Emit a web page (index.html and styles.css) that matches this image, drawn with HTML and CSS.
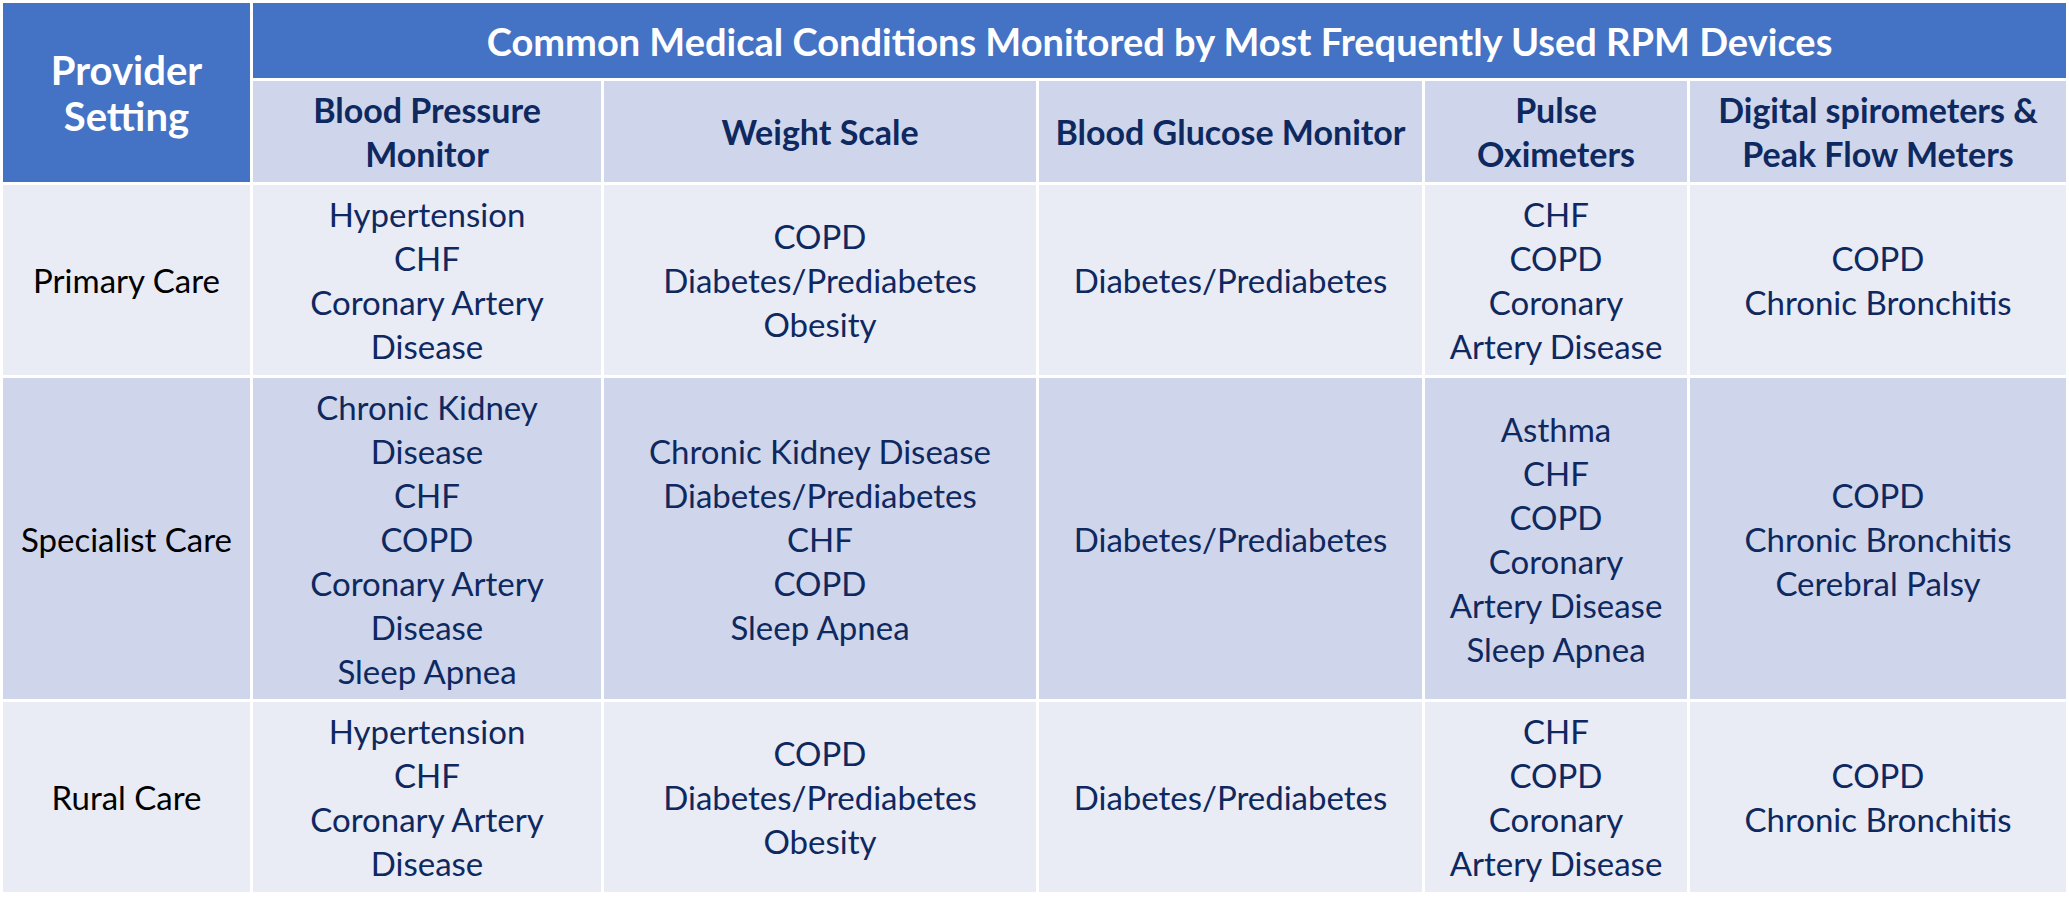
FILE: index.html
```html
<!DOCTYPE html>
<html>
<head>
<meta charset="utf-8">
<link rel="stylesheet" href="styles.css">
</head>
<body>
<table class="rpm">
  <colgroup>
    <col class="c0"><col class="c1"><col class="c2"><col class="c3"><col class="c4"><col class="c5">
  </colgroup>
  <thead>
    <tr class="h1">
      <th rowspan="2" class="provider">Provider<br>Setting</th>
      <th colspan="5" class="title">Common Medical Conditions Monitored by Most Frequently Used RPM Devices</th>
    </tr>
    <tr class="h2">
      <th>Blood Pressure<br>Monitor</th>
      <th>Weight Scale</th>
      <th>Blood Glucose Monitor</th>
      <th>Pulse<br>Oximeters</th>
      <th>Digital spirometers &amp;<br>Peak Flow Meters</th>
    </tr>
  </thead>
  <tbody>
    <tr class="r1 light">
      <td class="setting">Primary Care</td>
      <td>Hypertension<br>CHF<br>Coronary Artery<br>Disease</td>
      <td>COPD<br>Diabetes/Prediabetes<br>Obesity</td>
      <td>Diabetes/Prediabetes</td>
      <td>CHF<br>COPD<br>Coronary<br>Artery Disease</td>
      <td>COPD<br>Chronic Bronchitis</td>
    </tr>
    <tr class="r2 dark">
      <td class="setting">Specialist Care</td>
      <td>Chronic Kidney<br>Disease<br>CHF<br>COPD<br>Coronary Artery<br>Disease<br>Sleep Apnea</td>
      <td>Chronic Kidney Disease<br>Diabetes/Prediabetes<br>CHF<br>COPD<br>Sleep Apnea</td>
      <td>Diabetes/Prediabetes</td>
      <td>Asthma<br>CHF<br>COPD<br>Coronary<br>Artery Disease<br>Sleep Apnea</td>
      <td>COPD<br>Chronic Bronchitis<br>Cerebral Palsy</td>
    </tr>
    <tr class="r3 light">
      <td class="setting">Rural Care</td>
      <td>Hypertension<br>CHF<br>Coronary Artery<br>Disease</td>
      <td>COPD<br>Diabetes/Prediabetes<br>Obesity</td>
      <td>Diabetes/Prediabetes</td>
      <td>CHF<br>COPD<br>Coronary<br>Artery Disease</td>
      <td>COPD<br>Chronic Bronchitis</td>
    </tr>
  </tbody>
</table>
</body>
</html>
```
FILE: styles.css
```css
html, body {
  margin: 0;
  padding: 0;
  background: #ffffff;
}
body {
  font-family: Lato, "Open Sans", "Liberation Sans", sans-serif;
}
.rpm {
  table-layout: fixed;
  width: 2069px;
  border-collapse: separate;
  border-spacing: 3px;
  background: #ffffff;
}
.c0 { width: 247px; }
.c1 { width: 348px; }
.c2 { width: 432px; }
.c3 { width: 383px; }
.c4 { width: 262px; }
.c5 { width: 376px; }

.rpm th, .rpm td {
  padding: 0;
  text-align: center;
  vertical-align: middle;
  font-size: 33px;
  line-height: 44px;
}
.h1 { height: 75px; }
.h2 { height: 101px; }
.r1 { height: 190px; }
.r2 { height: 321px; }
.r3 { height: 190px; }

.rpm .provider {
  background: #4472c4;
  color: #ffffff;
  font-weight: 700;
  font-size: 40px;
  line-height: 46px;
}
.rpm .title {
  background: #4472c4;
  color: #ffffff;
  font-weight: 700;
  font-size: 38px;
}
.rpm .h2 th {
  background: #cfd5ea;
  color: #0e2860;
  font-weight: 700;
  font-size: 34px;
  line-height: 44px;
}
.light td { background: #e9ebf5; }
.dark td { background: #cfd5ea; }
.rpm td { color: #0e2860; }
.rpm td.setting { color: #000000; }
```
